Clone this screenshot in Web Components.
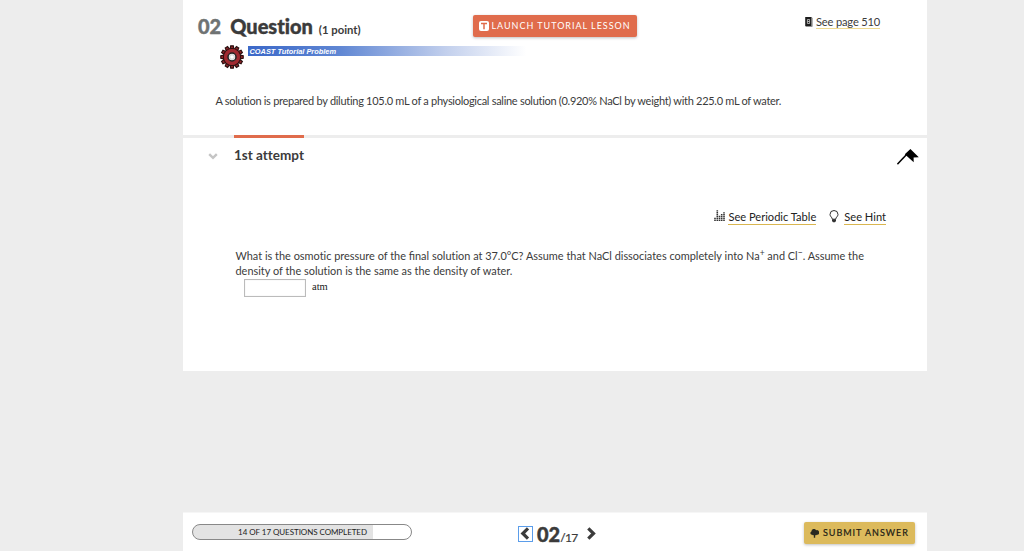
<!DOCTYPE html>
<html lang="en">
<head>
<meta charset="utf-8">
<title>Question 02</title>
<style>
    html, body { height: 100%; }
    body {
        margin: 0;
        overflow: hidden;
        background: #ededed;
        color: #3b3b3b;
        font-family: Lato, "Liberation Sans", sans-serif;
        font-size: 11px;
        font-variant-ligatures: none;
    }
</style>
</head>
<body>
<assignment-page>
    <question-card number="02" points="(1 point)">
        <action-button slot="action" kind="launch">LAUNCH TUTORIAL LESSON</action-button>
        <resource-link slot="link" icon="book" class="page">See page 510</resource-link>
        A solution is prepared by diluting 105.0 mL of a physiological saline solution (0.920% NaCl by weight) with 225.0 mL of water.
    </question-card>
    <attempt-card label="1st attempt">
        <resource-link slot="links" icon="table">See Periodic Table</resource-link>
        <resource-link slot="links" icon="bulb">See Hint</resource-link>
        <answer-prompt unit="atm">What is the osmotic pressure of the <span>final</span> solution at 37.0°C? Assume that NaCl dissociates completely into Na<sup>+</sup> and Cl<sup>−</sup>. Assume the<br>density of the solution is the same as the density of water.</answer-prompt>
    </attempt-card>
    <footer-bar slot="footer">
        <progress-pill slot="progress" done="14" total="17"></progress-pill>
        <question-nav slot="nav" current="02" total="17"></question-nav>
        <action-button slot="submit" kind="submit">SUBMIT ANSWER</action-button>
    </footer-bar>
</assignment-page>

<script>
const icons = {
    tutorial: `<svg width="10" height="10" viewBox="0 0 10 10"><rect width="10" height="10" rx="2" fill="#fff"/><path d="M2 2.6h6M5 2.6v5.6" stroke="#e06c4c" stroke-width="1.5"/></svg>`,
    upload: `<svg width="9" height="9" viewBox="0 0 9 9"><path d="M1.8 5.8A1.8 1.8 0 0 1 1.4 2.4 2.6 2.6 0 0 1 6.2 1.2 2.3 2.3 0 0 1 7.4 5.8H6.2L4.5 3.8 2.8 5.8z" fill="#282820"/><path d="M4.5 3.6v5.2M2.6 5.9l1.9-2 1.9 2" stroke="#282820" stroke-width="1.4" fill="none"/></svg>`,
    book: `<svg width="8" height="10" viewBox="0 0 8 10"><path d="M.2 0h6.4v9H.2z" fill="#1d1d1d"/><path d="M7.2 .8v8.7H.6" stroke="#888" stroke-width=".9" fill="none"/><path d="M2.4 2.5h2.2v4H2.4zM2.4 4.5h2" stroke="#ccc" stroke-width=".8" fill="none"/></svg>`,
    table: `<svg width="11" height="11" viewBox="0 0 11 11"><g stroke="#333" stroke-width="1.6" stroke-dasharray="1.4 .5"><path d="M1 11V7.4M3.3 11V.2M5.5 11V5.2M7.7 11V4M10 11V2.2"/></g></svg>`,
    bulb: `<svg width="10" height="13" viewBox="0 0 10 13"><path d="M3.3 9.2C3.2 7.1 1 6.7 1 4.5a4 4 0 0 1 8 0C9 6.7 6.8 7.1 6.7 9.2z" fill="none" stroke="#333"/><path d="M3 9.3h4v1.8L6 12.2H4L3 11.1z" fill="#333"/></svg>`,
    pin: `<svg width="22" height="16" viewBox="0 0 22 16"><path d="M.4 15.2 9.8 5.2" stroke="#000" stroke-width="1.5"/><path d="M7.8 5.2 13.4 0 21.8 8.2 16.6 8.4 16.7 13.3z" fill="#000"/></svg>`,
    down: `<svg width="10" height="7" viewBox="0 0 10 7"><path d="M1.2 1.2 5 4.9 8.8 1.2" fill="none" stroke="#c5c5c5" stroke-width="2.4"/></svg>`,
    prev: `<svg width="11" height="13" viewBox="0 0 11 13"><path d="M9 1.4 3.8 6.5 9 11.6" fill="none" stroke="#3b3b3b" stroke-width="3.2"/></svg>`,
    next: `<svg width="11" height="13" viewBox="0 0 11 13"><path d="M2.3 1.4 7.5 6.5 2.3 11.6" fill="none" stroke="#3b3b3b" stroke-width="3.2"/></svg>`
};

class AssignmentPage extends HTMLElement {
    constructor() {
        super();
        this.attachShadow({mode: 'open'}).innerHTML = `
            <style>
                :host {
                    display: flex;
                    flex-direction: column;
                    width: 744px;
                    height: 551px;
                    margin-left: 183px;
                }
                main { flex: 1; display: flex; flex-direction: column; gap: 3px; }
            </style>
            <main><slot></slot></main>
            <slot name="footer"></slot>`;
    }
}

class CoastBanner extends HTMLElement {
    constructor() {
        super();
        // twelve teeth around the hub
        let teeth = '';
        for (let i = 0; i < 12; i++) {
            teeth += `<path d="M10.2 4 10.7.8h2.6l.5 3.2z" transform="rotate(${i * 30} 12 12)"/>`;
        }
        this.attachShadow({mode: 'open'}).innerHTML = `
            <style>
                :host { display: flex; gap: 4px; }
                svg { flex: none; }
                .bar {
                    width: 284px;
                    height: 10px;
                    margin-top: 1px;
                    box-sizing: border-box;
                    padding-left: 1.5px;
                    background: linear-gradient(90deg, #3b68c8, #5f86d3 32%, #c3d0ed 70%, #fff 98%);
                    color: #fff;
                    font: italic bold 7.4px/11px "Liberation Sans", sans-serif;
                    white-space: nowrap;
                }
            </style>
            <svg width="24" height="24" viewBox="0 0 24 24">
                <g fill="#8e2429" stroke="#2c1111" stroke-width="1.2">${teeth}<circle cx="12" cy="12" r="8.5"/></g>
                <circle cx="12" cy="12" r="8" fill="#a02a31"/>
                <circle cx="12" cy="12" r="4" fill="#eee" stroke="#222" stroke-width="1.5"/>
                <circle cx="12" cy="12" r="2.2" fill="#fff" stroke="#bbb" stroke-width=".6"/>
            </svg>
            <div class="bar">COAST Tutorial Problem</div>`;
    }
}

class QuestionCard extends HTMLElement {
    constructor() {
        super();
        this.attachShadow({mode: 'open'}).innerHTML = `
            <style>
                :host { display: block; height: 135px; background: #fff; }
                header {
                    display: grid;
                    grid-template-columns: 275px 332px auto;
                    height: 45px;
                    padding-left: 15px;
                }
                h1 { margin: 14px 0 0; font-size: 20px; line-height: 24px; font-weight: 900; white-space: nowrap; -webkit-text-stroke: .4px; }
                .num { color: #6f7373; margin-right: 9px; }
                .points { font-size: 11.3px; font-weight: 700; margin-left: 6px; -webkit-text-stroke: 0; }
                slot[name=action] { display: block; padding-top: 15px; }
                slot[name=link] { display: block; padding-top: 15px; }
                coast-banner { margin-left: 37px; }
                p { margin: 24px 0 0 32.5px; line-height: 15px; letter-spacing: -.285px; white-space: nowrap; }
            </style>
            <header>
                <h1><span class="num">${this.getAttribute('number')}</span>Question<span class="points">${this.getAttribute('points')}</span></h1>
                <slot name="action"></slot>
                <slot name="link"></slot>
            </header>
            <coast-banner></coast-banner>
            <p><slot></slot></p>`;
    }
}

class ActionButton extends HTMLElement {
    constructor() {
        super();
        const launch = this.getAttribute('kind') === 'launch';
        this.attachShadow({mode: 'open'}).innerHTML = `
            <style>
                :host { display: block; }
                button {
                    display: flex;
                    align-items: center;
                    box-sizing: border-box;
                    width: ${launch ? 164 : 111}px;
                    height: 22px;
                    padding: 0 0 0 6px;
                    gap: ${launch ? 2.5 : 4}px;
                    border: 0;
                    border-radius: 2px;
                    background: ${launch ? '#e06c4c' : '#dcba5c'};
                    color: ${launch ? '#fff' : '#1c1c16'};
                    box-shadow: 0 1px 3px rgba(0, 0, 0, .25);
                    font: 400 9px/22px Lato, sans-serif;
                    letter-spacing: .97px;
                    white-space: nowrap;
                    -webkit-text-stroke: ${launch ? 0 : .2}px;
                }
                svg { flex: none; }
            </style>
            <button>${launch ? icons.tutorial : icons.upload}<span><slot></slot></span></button>`;
    }
}

class ResourceLink extends HTMLElement {
    constructor() {
        super();
        this.attachShadow({mode: 'open'}).innerHTML = `
            <style>
                :host { display: inline-flex; align-items: flex-start; color: #222; --line: #d9b650; --gap: 3px; }
                :host(.page) { color: #3b3b3b; --line: #efd98f; letter-spacing: -.15px; }
                :host([icon=bulb]) { --gap: 5px; }
                a { border-bottom: 1px solid var(--line); font-size: 11.1px; line-height: 14px; white-space: nowrap; }
                :host(.page) a { line-height: 13px; }
                svg { display: block; margin: 2px var(--gap) 0 0; }
                :host([icon=table]) svg { margin-top: 0; }
                :host([icon=bulb]) svg { margin-top: 0; }
            </style>
            ${icons[this.getAttribute('icon')]}<a><slot></slot></a>`;
    }
}

class AttemptCard extends HTMLElement {
    constructor() {
        super();
        this.attachShadow({mode: 'open'}).innerHTML = `
            <style>
                :host { display: block; height: 233px; background: #fff; }
                header { display: flex; height: 72px; }
                .toggle { width: 26px; padding: 15px 0 0 25px; }
                h2 { margin: 0; font-size: 13.5px; line-height: 18px; font-weight: 700; padding-top: 9px; white-space: nowrap; }
                h2::before { content: ""; display: block; height: 3px; margin: -12px 0 8px; background: #e06c4c; }
                .pin { margin: 11px 8px 0 auto; }
                nav { display: flex; justify-content: flex-end; gap: 13px; padding-right: 41px; }
                svg { display: block; }
                main { padding: 23px 0 0 52.5px; }
            </style>
            <header>
                <div class="toggle">${icons.down}</div>
                <h2>${this.getAttribute('label')}</h2>
                <div class="pin">${icons.pin}</div>
            </header>
            <nav><slot name="links"></slot></nav>
            <main><slot></slot></main>`;
    }
}

class AnswerPrompt extends HTMLElement {
    constructor() {
        super();
        this.attachShadow({mode: 'open'}).innerHTML = `
            <style>
                :host { display: block; }
                p { margin: 0 0 1px; font-size: 10.93px; line-height: 15px; white-space: nowrap; }
                ::slotted(span) { font-variant-ligatures: normal; }
                ::slotted(sup) { font-size: 8.5px; line-height: 0; vertical-align: 4.5px; }
                label { display: flex; gap: 6px; padding-left: 8.5px; font: 10.5px/16px "Liberation Serif", serif; color: #222; }
                input { box-sizing: border-box; width: 62px; height: 18px; margin: 0; border: 1px solid #bbb; background: #fff; box-shadow: inset 0 0 1px #ccc; }
            </style>
            <p><slot></slot></p>
            <label><input type="text">${this.getAttribute('unit')}</label>`;
    }
}

class FooterBar extends HTMLElement {
    constructor() {
        super();
        this.attachShadow({mode: 'open'}).innerHTML = `
            <style>
                :host {
                    display: grid;
                    grid-template-columns: 326px 286px auto;
                    height: 39px;
                    box-sizing: border-box;
                    padding-left: 9px;
                    background: #fff;
                    border-top: 1px solid #f6f6f6;
                }
                slot { display: block; }
                slot[name=progress] { padding-top: 11px; }
                slot[name=nav] { padding-top: 9px; }
                slot[name=submit] { padding-top: 9px; }
            </style>
            <slot name="progress"></slot>
            <slot name="nav"></slot>
            <slot name="submit"></slot>`;
    }
}

class ProgressPill extends HTMLElement {
    constructor() {
        super();
        const done = this.getAttribute('done');
        const total = this.getAttribute('total');
        this.attachShadow({mode: 'open'}).innerHTML = `
            <style>
                :host { display: block; }
                div {
                    box-sizing: border-box;
                    width: 220px;
                    height: 16px;
                    padding-left: 1px;
                    border: 1px solid #888;
                    border-radius: 8px;
                    background: linear-gradient(90deg, #e3e3e3 ${done / total * 100}%, #fff 0);
                    color: #222;
                    font-size: 8px;
                    line-height: 14px;
                    letter-spacing: -.06px;
                    text-align: center;
                    white-space: nowrap;
                }
            </style>
            <div>${done} OF ${total} QUESTIONS COMPLETED</div>`;
    }
}

class QuestionNav extends HTMLElement {
    constructor() {
        super();
        this.attachShadow({mode: 'open'}).innerHTML = `
            <style>
                :host { display: flex; align-items: flex-start; height: 26px; }
                .prev { outline: 1px solid #5b9dea; outline-offset: -1px; width: 15px; height: 16px; margin-top: 4px; }
                .prev svg { margin: 1px 0 0 1px; }
                .next { margin: 5px 0 0 9px; }
                svg { display: block; }
                strong { font-size: 20px; line-height: 24px; font-weight: 900; margin-left: 4px; -webkit-text-stroke: .4px; }
                small { font-size: 12px; font-weight: 400; letter-spacing: -.7px; -webkit-text-stroke: .2px; }
            </style>
            <div class="prev">${icons.prev}</div>
            <strong>${this.getAttribute('current')}<small>/${this.getAttribute('total')}</small></strong>
            <div class="next">${icons.next}</div>`;
    }
}

window.customElements.define('assignment-page', AssignmentPage);
window.customElements.define('coast-banner', CoastBanner);
window.customElements.define('question-card', QuestionCard);
window.customElements.define('action-button', ActionButton);
window.customElements.define('resource-link', ResourceLink);
window.customElements.define('attempt-card', AttemptCard);
window.customElements.define('answer-prompt', AnswerPrompt);
window.customElements.define('footer-bar', FooterBar);
window.customElements.define('progress-pill', ProgressPill);
window.customElements.define('question-nav', QuestionNav);
</script>
</body>
</html>
